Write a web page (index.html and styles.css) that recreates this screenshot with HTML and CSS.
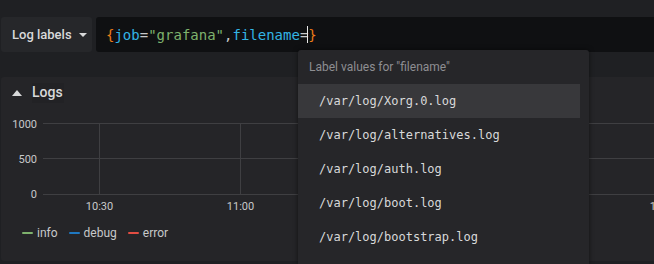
FILE: index.html
```html
<!DOCTYPE html>
<html>
<head>
<meta charset="utf-8">
<link rel="stylesheet" href="styles.css">
</head>
<body>
<div class="query-row">
  <button class="labels-btn">Log labels <span class="caret"></span></button>
  <div class="query-field"><span class="brace">{</span><span class="key">job</span><span class="op">=</span><span class="str">"grafana"</span><span class="op">,</span><span class="key">filename</span><span class="op">=</span><span class="cursor"></span><span class="brace">}</span></div>
</div>
<div class="panel">
  <div class="panel-header"><span class="collapse"></span><span class="panel-title">Logs</span></div>
  <svg class="chart" width="653" height="108" viewBox="0 0 653 108">
    <g class="grid">
      <line x1="42" y1="14.5" x2="653" y2="14.5"/>
      <line x1="42" y1="49.5" x2="653" y2="49.5"/>
      <line x1="42" y1="85.5" x2="653" y2="85.5"/>
      <line x1="98.5" y1="14" x2="98.5" y2="85"/>
      <line x1="239.5" y1="14" x2="239.5" y2="85"/>
      <line x1="380.5" y1="14" x2="380.5" y2="85"/>
      <line x1="521.5" y1="14" x2="521.5" y2="85"/>
    </g>
    <g class="ylabels">
      <text x="36" y="18.5">1000</text>
      <text x="36" y="53.5">500</text>
      <text x="36" y="89">0</text>
    </g>
    <g class="xlabels">
      <text x="98.5" y="101">10:30</text>
      <text x="239.5" y="101">11:00</text>
      <text x="662.5" y="101">12:30</text>
    </g>
  </svg>
  <div class="legend">
    <span class="legend-item"><i class="swatch info"></i>info</span>
    <span class="legend-item"><i class="swatch debug"></i>debug</span>
    <span class="legend-item"><i class="swatch error"></i>error</span>
  </div>
</div>
<div class="typeahead">
  <div class="typeahead-header">Label values for "filename"</div>
  <ul class="typeahead-list">
    <li class="item active">/var/log/Xorg.0.log</li>
    <li class="item">/var/log/alternatives.log</li>
    <li class="item">/var/log/auth.log</li>
    <li class="item">/var/log/boot.log</li>
    <li class="item">/var/log/bootstrap.log</li>
  </ul>
</div>
</body>
</html>
```

FILE: styles.css
```css
html, body {
  margin: 0;
  padding: 0;
}
body {
  width: 654px;
  height: 264px;
  overflow: hidden;
  background: #1f2023;
  font-family: Roboto, "Noto Sans", sans-serif;
  color: #d8d9da;
  position: relative;
}
.query-row {
  display: flex;
  gap: 4px;
  padding: 17px 0 0 1px;
  height: 35px;
}
.labels-btn {
  width: 91px;
  height: 35px;
  border: none;
  border-radius: 3px;
  background: #26272a;
  color: #d8d9da;
  font-family: Roboto, sans-serif;
  font-size: 13px;
  font-weight: 500;
  padding: 0 0 0 11px;
  display: flex;
  align-items: center;
  gap: 7px;
  text-align: left;
}
.caret {
  width: 0;
  height: 0;
  border-left: 4px solid transparent;
  border-right: 4px solid transparent;
  border-top: 4px solid #d8d9da;
  margin-top: 1px;
}
.query-field {
  flex: 1;
  background: #0f1012;
  border-radius: 3px 0 0 3px;
  display: flex;
  align-items: center;
  padding-left: 10px;
  font-family: "DejaVu Sans Mono", "Liberation Mono", monospace;
  font-size: 14px;
  white-space: pre;
}
.brace { color: #eb7b18; }
.key { color: #33b5e5; }
.op { color: #c8c9ca; }
.str { color: #7eb26d; }
.cursor {
  display: inline-block;
  width: 1px;
  height: 17px;
  background: #e8e8e8;
  margin: 0 0 0 -1px;
}
.panel {
  margin: 25px 0 0 1px;
  height: 184px;
  background: #252528;
  border-radius: 3px 0 0 3px;
}
.panel-header {
  height: 30px;
  display: flex;
  align-items: center;
  padding-left: 11px;
  padding-top: 2px;
  box-sizing: border-box;
}
.collapse {
  width: 0;
  height: 0;
  border-left: 5px solid transparent;
  border-right: 5px solid transparent;
  border-bottom: 6px solid #d8d9da;
  margin-right: 10px;
}
.panel-title {
  font-size: 14px;
  font-weight: 500;
  color: #d8d9da;
  background: #222225;
  padding: 1px 1px 3px 0;
}
.chart {
  display: block;
  margin-top: 2px;
}
.grid line {
  stroke: #3f3f42;
  stroke-width: 1;
}
.ylabels text {
  fill: #c8c9ca;
  font-family: Roboto, sans-serif;
  font-size: 11px;
  text-anchor: end;
}
.xlabels text {
  fill: #c8c9ca;
  font-family: Roboto, sans-serif;
  font-size: 11px;
  text-anchor: middle;
}
.legend {
  display: flex;
  gap: 11px;
  padding: 9px 0 0 21px;
  font-size: 12px;
  color: #c8c9ca;
}
.legend-item {
  display: flex;
  align-items: center;
  gap: 4px;
}
.swatch {
  display: inline-block;
  width: 11px;
  height: 2px;
  border-radius: 1px;
}
.swatch.info { background: #7eb26d; }
.swatch.debug { background: #1f78c1; }
.swatch.error { background: #e24d42; }
.typeahead {
  position: absolute;
  left: 298px;
  top: 50px;
  width: 291px;
  height: 214px;
  overflow: hidden;
  background: #262629;
  border-radius: 3px 3px 0 0;
  box-shadow: 0 0 5px rgba(0, 0, 0, 0.55);
}
.typeahead-header {
  height: 34px;
  box-sizing: border-box;
  padding: 10px 0 0 11px;
  font-size: 12px;
  color: #8e8e92;
}
.typeahead-list {
  list-style: none;
  margin: 0;
  padding: 0;
  width: 282px;
}
.item {
  height: 34px;
  line-height: 34px;
  padding-left: 21px;
  font-family: "DejaVu Sans Mono", "Liberation Mono", monospace;
  font-size: 12px;
  color: #d8d9da;
}
.item.active {
  background: #38383b;
}
```
